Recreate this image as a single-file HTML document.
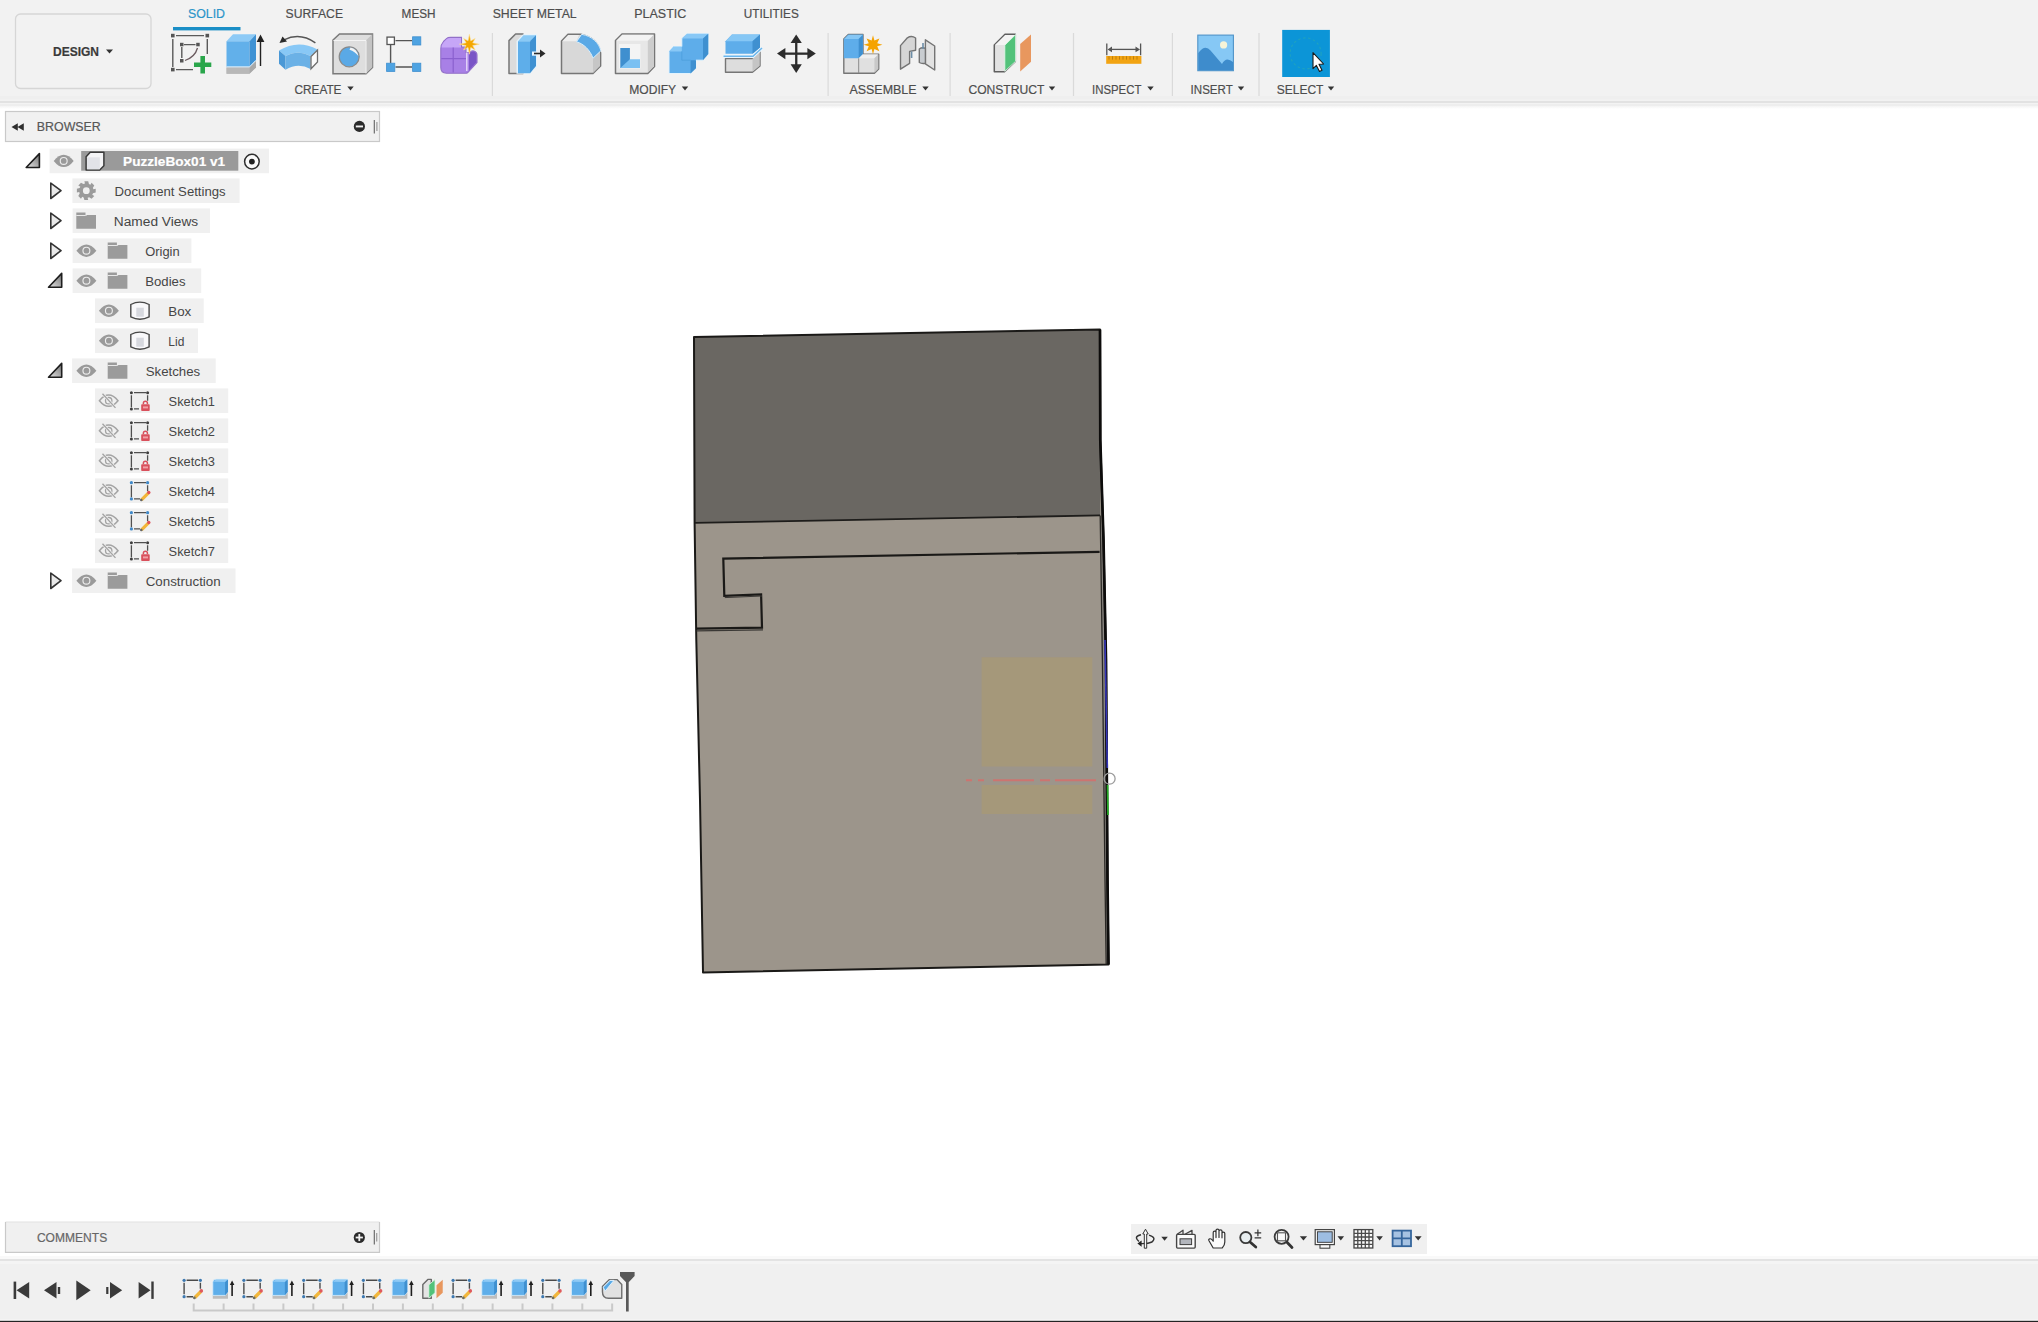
<!DOCTYPE html>
<html><head><meta charset="utf-8">
<style>
html,body{margin:0;padding:0;background:#fff;width:2038px;height:1322px;overflow:hidden}
svg{position:absolute;left:0;top:0;display:block}
text{font-family:"Liberation Sans",sans-serif;stroke-width:0.2px;paint-order:stroke}
</style></head>
<body>
<svg width="2038" height="1322" viewBox="0 0 2038 1322">
<defs>
<linearGradient id="tbshadow" x1="0" y1="0" x2="0" y2="1"><stop offset="0" stop-color="#f4f4f4"/><stop offset="1" stop-color="#ffffff"/></linearGradient>
</defs>
<!-- ============ TOOLBAR ============ -->
<g id="toolbar">
<rect x="0" y="0" width="2038" height="101" fill="#f2f2f2"/>
<rect x="0" y="96" width="2038" height="3.5" fill="#efefef"/>
<rect x="0" y="101" width="2038" height="2" fill="#e2e2e2"/>
<rect x="0" y="103" width="2038" height="1" fill="#f3f3f3"/>
<rect x="0" y="104" width="2038" height="2" fill="#eeeeee"/>
<rect x="0" y="106" width="2038" height="3" fill="url(#tbshadow)"/>
<rect x="15.5" y="14" width="135.5" height="74.5" rx="5" fill="#f2f2f2" stroke="#d6d6d6" stroke-width="1.3"/>
<text x="53" y="56.3" font-size="13.6" font-weight="bold" fill="#3a3a3a" textLength="46" lengthAdjust="spacingAndGlyphs" stroke="#3a3a3a">DESIGN</text>
<path d="M106 49.5 L113 49.5 L109.5 53.5 Z" fill="#333"/>
<!-- tabs -->
<g font-size="13.6" fill="#4d4d4d" stroke="#4d4d4d">
<text x="188" y="17.9" fill="#2b95c9" textLength="37" lengthAdjust="spacingAndGlyphs" stroke="#2b95c9">SOLID</text>
<text x="285.6" y="17.9" textLength="57.4" lengthAdjust="spacingAndGlyphs">SURFACE</text>
<text x="401.6" y="17.9" textLength="34" lengthAdjust="spacingAndGlyphs">MESH</text>
<text x="492.7" y="17.9" textLength="84" lengthAdjust="spacingAndGlyphs">SHEET METAL</text>
<text x="634.3" y="17.9" textLength="52" lengthAdjust="spacingAndGlyphs">PLASTIC</text>
<text x="743.8" y="17.9" textLength="55" lengthAdjust="spacingAndGlyphs">UTILITIES</text>
</g>
<rect x="173" y="27" width="67.5" height="3.4" fill="#1b8ec6"/>
<!-- group labels -->
<g font-size="13.4" fill="#4d4d4d" stroke="#4d4d4d">
<text x="294.5" y="94.4" textLength="47" lengthAdjust="spacingAndGlyphs">CREATE</text>
<text x="629.2" y="94.4" textLength="47" lengthAdjust="spacingAndGlyphs">MODIFY</text>
<text x="849.4" y="94.4" textLength="67.2" lengthAdjust="spacingAndGlyphs">ASSEMBLE</text>
<text x="968.4" y="94.4" textLength="76" lengthAdjust="spacingAndGlyphs">CONSTRUCT</text>
<text x="1092" y="94.4" textLength="49.4" lengthAdjust="spacingAndGlyphs">INSPECT</text>
<text x="1190.6" y="94.4" textLength="42.2" lengthAdjust="spacingAndGlyphs">INSERT</text>
<text x="1276.7" y="94.4" textLength="46.7" lengthAdjust="spacingAndGlyphs">SELECT</text>
</g>
<g fill="#333">
<path d="M347.3 86.6h6.4l-3.2 4z"/>
<path d="M681.8 86.6h6.4l-3.2 4z"/>
<path d="M922.3 86.6h6.4l-3.2 4z"/>
<path d="M1048.8 86.6h6.4l-3.2 4z"/>
<path d="M1147.3 86.6h6.4l-3.2 4z"/>
<path d="M1237.8 86.6h6.4l-3.2 4z"/>
<path d="M1327.8 86.6h6.4l-3.2 4z"/>
</g>
<g fill="#dadada">
<rect x="491.8" y="33" width="1.2" height="63"/>
<rect x="827.5" y="33" width="1.2" height="63"/>
<rect x="949.5" y="33" width="1.2" height="63"/>
<rect x="1072.9" y="33" width="1.2" height="63"/>
<rect x="1171.8" y="33" width="1.2" height="63"/>
<rect x="1258.4" y="33" width="1.2" height="63"/>
</g>
<!-- Create sketch -->
<g>
<g stroke="#5a5a5a" stroke-width="1.4" fill="none">
<path d="M176 35.6H204M172.8 39V67M207.3 39V54M176 69.6H193"/>
<path d="M184 44.6H195.5M181.8 47V58"/>
</g>
<path d="M197.5 48 Q195 57 185 60.5" stroke="#6a5a5e" stroke-width="1.3" fill="none"/>
<g fill="#555">
<rect x="171" y="33.8" width="3.6" height="3.6"/><rect x="205.5" y="33.8" width="3.6" height="3.6"/><rect x="171" y="67.8" width="3.6" height="3.6"/>
<rect x="180" y="42.8" width="3.5" height="3.5"/><rect x="196.2" y="42.8" width="3.5" height="3.5"/><rect x="180" y="59" width="3.5" height="3.5"/>
</g>
<path d="M200.4 56H205V62.5H211.3V67H205V73.5H200.4V67H194V62.5H200.4Z" fill="#2aa64b"/>
</g>
<!-- Extrude -->
<g>
<path d="M226.5 67.5H249.5L256 61V67.5L249.5 73.8H226.5Z" fill="#c2c2c2"/>
<path d="M226.5 67.3H249.5V73.8H226.5Z" fill="#b8b8b8"/>
<path d="M249.5 67.3L256 61V67.5L249.5 73.8Z" fill="#a9a9a9"/>
<path d="M226.5 41.2H249.5V66.8H226.5Z" fill="#62b0ea"/>
<path d="M226.5 41.2L233 34.3H256L249.5 41.2Z" fill="#8dcaf6"/>
<path d="M249.5 41.2L256 34.3V60.2L249.5 66.8Z" fill="#3f92d4"/>
<path d="M226.5 66.8H249.5L256 60.2" stroke="#cfe8fa" stroke-width="1" fill="none"/>
<path d="M260.5 66V40" stroke="#222" stroke-width="1.4"/>
<path d="M256.6 42L260.5 34.5L264.4 42Z" fill="#222"/>
</g>
<!-- Revolve -->
<g>
<path d="M315.4 42.8 Q300 32 284 39.8" stroke="#555" stroke-width="1.5" fill="none"/>
<path d="M279.5 43L282.5 36.6L287 41.6Z" fill="#2a2a2a"/>
<path d="M279 50.5 Q298 39 317.5 49.5 L310.5 56 Q298 49 285.5 56 Z" fill="#88c8f6"/>
<path d="M279 50.5 L285.5 56 L285.5 69.8 L279 63.8 Z" fill="#4a98d6"/>
<path d="M285.5 56 Q298 49 310.5 56 L310.5 69 Q298 62 285.5 69.8 Z" fill="#6bb1e6"/>
<path d="M311 56.5 L317.5 50 L317.5 62 L311 68.8 Z" fill="#fbfbfb" stroke="#6d6d6d" stroke-width="1.3"/>
</g>
<!-- Hole -->
<g>
<path d="M333 40L339.5 33.9H372.5V67.5L366 73.7H333Z" fill="#dedede" stroke="#7a7a7a" stroke-width="1.5"/>
<path d="M365.8 40.6L372.3 34.2V67.3L365.8 73.4Z" fill="#c4c4c4"/>
<path d="M333.5 40.5H366V73.4" stroke="#f4f4f4" stroke-width="1" fill="none"/>
<circle cx="349.2" cy="56.8" r="10" fill="#5aa9e6" stroke="#8a8a8a" stroke-width="1.2"/>
<path d="M350.5 47.6 Q357 49 358.4 56 Q355 51.5 349.5 49.8Z" fill="#f4f4f4"/>
</g>
<!-- Pattern -->
<g>
<path d="M395.5 40.6H412M390.6 45V63M395.5 67H412" stroke="#555" stroke-width="1.4"/>
<rect x="387" y="37.1" width="7.4" height="7.4" fill="#fff" stroke="#555" stroke-width="1.3"/>
<g fill="#4ea3e2" stroke="#3f8fd0" stroke-width="0.8">
<rect x="412.6" y="36.8" width="8.2" height="8.2"/>
<rect x="386.6" y="63.2" width="8.2" height="8.2"/>
<rect x="412.6" y="63.2" width="8.2" height="8.2"/>
</g>
</g>
<!-- Form -->
<g>
<path d="M446.5 73.2Q440.8 73.2 440.8 67.5V48.5Q440.8 44.5 443.5 41.5L446.5 38.6Q447.8 37.4 450.5 37.4H461.5V47H466V52.5H469.5Q471 50.5 474 51Q477 52 477 55V62.5L467.5 72.8Q467 73.2 465.5 73.2Z" fill="#a880e6" stroke="#9270c8" stroke-width="1.1"/>
<path d="M441.6 47.5Q441.6 44.6 443.9 42L446.9 39Q448.1 38.1 450.5 38.1H461V47.5Z" fill="#c6a6f7"/>
<path d="M453.2 47.5V72.6M441.3 58.7H466" stroke="#8a60cf" stroke-width="1.2"/>
<path d="M469 53Q470.5 51.2 473.5 51.5Q476.4 52.3 476.4 55V62.3L469 70.5Z" fill="#7a55c6"/>
<path d="M466.8 52.5V71" stroke="#eadffb" stroke-width="1.3"/>
<path d="M469.40 34.20 L470.78 40.87 L475.20 38.40 L472.73 42.82 L479.40 44.20 L472.73 45.58 L475.20 50.00 L470.78 47.53 L469.40 54.20 L468.02 47.53 L463.60 50.00 L466.07 45.58 L459.40 44.20 L466.07 42.82 L463.60 38.40 L468.02 40.87Z" fill="#f4a700" stroke="#fbe3a0" stroke-width="0.6"/>
</g>
<!-- Press pull -->
<g>
<path d="M509 73.5V40.6L515.6 34H523V73.5Z" fill="#dcdcdc" stroke="#767676" stroke-width="1.5" stroke-linejoin="round"/>
<path d="M516.5 41L523 34.2H537V66.5L530.3 73.8H516.5Z" fill="#e3f3fd"/>
<path d="M518 41.2H530V73.2H518Z" fill="#5eaeea"/>
<path d="M518 41.2L523.5 35.2H536V41.2H530Z" fill="#8acaf6"/>
<path d="M530 41.2L536 35.2V66L530 73.2Z" fill="#3f91d2"/>
<rect x="532" y="51.5" width="4" height="4.2" fill="#e8f6ff"/>
<path d="M534 53.5H541" stroke="#2a2a2a" stroke-width="1.6"/>
<path d="M540 49.4L545.5 53.5L540 57.6Z" fill="#2a2a2a"/>
</g>
<!-- Fillet -->
<g>
<path d="M561.5 73.5V41L568 34.2H581 Q598 38 600.6 53V66L593 73.5Z" fill="#d8d8d8" stroke="#767676" stroke-width="1.5" stroke-linejoin="round"/>
<path d="M562.3 41.3L568.3 35H579L576.5 41.3Z" fill="#eeeeee"/>
<path d="M593 57L600 50.5V66L593 73Z" fill="#c6c6c6"/>
<path d="M581.6 34.3C592 36 599 43 600.9 50.8L593 58.2C590 50 584 44 576.5 41.7Z" fill="#5aa9e6" stroke="#d6edfc" stroke-width="1"/>
</g>
<!-- Shell -->
<g>
<path d="M615.5 73.5V40.5L622 34H654.5V66.5L647.8 73.5Z" fill="#e7e7e7" stroke="#767676" stroke-width="1.5" stroke-linejoin="round"/>
<path d="M647.8 41L654 34.6V66.3L647.8 72.8Z" fill="#cdcdcd"/>
<path d="M616.3 40.8L622.3 34.8H653.5L647.5 40.8Z" fill="#f3f3f3"/>
<rect x="619" y="44" width="21.5" height="24.5" fill="#f4f4f4"/>
<rect x="620.3" y="48" width="9.6" height="20" fill="#3f8fcf"/>
<path d="M620.3 68L629.9 59.3H640V68Z" fill="#7ac0f2"/>
</g>
<!-- Combine -->
<g>
<path d="M669 73.5V51.4L673.4 46.5H681.8V38.6L687 33.7H708.3V54L703 60.2H696V68.2L690.6 73.5Z" fill="#5eadea" stroke="#e3f3fd" stroke-width="1"/>
<path d="M681.8 38.6L687 33.7H708.3L703 38.6Z" fill="#88c8f6"/>
<path d="M703 38.6L708.3 33.7V54L703 60.2Z" fill="#3f90d0"/>
<path d="M669 51.4L673.4 46.5H681.8V51.4Z" fill="#88c8f6"/>
<path d="M690.6 60.2H696V68.2L690.6 73.5Z" fill="#3f90d0"/>
<path d="M681.8 51.4V60.2H690.6" stroke="#4d9edc" stroke-width="0.8" fill="none"/>
</g>
<!-- Split body -->
<g>
<path d="M725.5 72.2V58.6H752.5L760 51.5V66L752.5 72.2Z" fill="#dddddd" stroke="#767676" stroke-width="1.4" stroke-linejoin="round"/>
<path d="M752.5 58.8L759.6 52V65.8L752.5 71.8Z" fill="#c5c5c5"/>
<path d="M723.5 56.3H753L762 48" stroke="#eaf6ff" stroke-width="3.6" fill="none"/>
<path d="M723.5 56.3H753L762 48" stroke="#6bb6ec" stroke-width="1.5" fill="none"/>
<path d="M725.5 41.2L732 34.4H760V47.5L752.5 53.8H725.5Z" fill="#5eadea"/>
<path d="M725.5 41.2L732 34.4H760L752.5 41.2Z" fill="#86c7f5"/>
<path d="M752.5 41.2L760 34.4V47.5L752.5 53.8Z" fill="#3f90d0"/>
</g>
<!-- Move -->
<g fill="#2c2c2c">
<rect x="795.1" y="40" width="2.3" height="27"/>
<rect x="783" y="52.5" width="27" height="2.3"/>
<path d="M796.2 34.6L801.8 43H790.6Z"/>
<path d="M796.2 73L801.8 64.3H790.6Z"/>
<path d="M777 53.6L785.4 48V59.2Z"/>
<path d="M815.8 53.6L807.4 48V59.2Z"/>
</g>
<!-- New component -->
<g>
<path d="M843.8 73.2V39L848.3 34.4H863V54.2H878.7V68.9L874.4 73.2Z" fill="#e0e0e0" stroke="#767676" stroke-width="1.4" stroke-linejoin="round"/>
<path d="M843.8 58.3V39L848.3 34.4H863V54.2L858.7 58.3Z" fill="#5eadea"/>
<path d="M844.3 39L848.5 35H862.5L858.5 39Z" fill="#86c7f5"/>
<path d="M858.7 39L862.8 35V54.2L858.7 58.3Z" fill="#3f90d0"/>
<path d="M858.7 58.3L862.8 54.2H878.3L874.4 58.3Z" fill="#efefef"/>
<path d="M874.4 58.3L878.3 54.4V68.8L874.4 72.8Z" fill="#c8c8c8"/>
<path d="M858.7 58.3V73" stroke="#8a8a8a" stroke-width="1"/>
<path d="M873 35.2L874.4 40.6L879.4 38.4L877.2 43.3L882.4 44.8L877.2 46.3L879.4 51.2L874.4 49L873 54.2L871.6 49L866.6 51.2L868.8 46.3L863.6 44.8L868.8 43.3L866.6 38.4L871.6 40.6Z" fill="#f5a300"/>
</g>
<!-- Joint -->
<g stroke="#747474" stroke-width="1.4" stroke-linejoin="round">
<path d="M900.5 69.2V45.6L907.4 37.8Q911.5 35.2 915.6 38V50.3L909.6 51.4V63.4Z" fill="#d6d6d6"/>
<path d="M925.4 39.8L934.7 46V70L925.4 63.8Z" fill="#e2e2e2"/>
<path d="M919.3 49V62.5Q922 64 925.4 63.2V48.3Q922 47 919.3 49Z" fill="#c8ccd0"/>
</g>
<path d="M911.6 51.5V58M923 43V49" stroke="#6d8ea8" stroke-width="1.6"/>
<!-- Construct plane -->
<g>
<path d="M994.3 71.7V45L1005 34.2H1015.3V61.5L1004.5 71.7Z" fill="#e2e2e2" stroke="#5f5f5f" stroke-width="1.5" stroke-linejoin="round"/>
<path d="M995 45L1005.3 35H1015L1004.5 45Z" fill="#f4f4f4"/>
<path d="M1004.8 45.2L1015.6 34.6V61.3L1004.8 71.3Z" fill="#52c27a" stroke="#dff7e6" stroke-width="0.9"/>
<path d="M1020.2 43.9L1031 34.6V61.7L1020.2 71.5Z" fill="#e8975e"/>
</g>
<!-- Measure -->
<g>
<path d="M1106.8 43.4V55.3M1140.6 43.4V55.3" stroke="#555" stroke-width="1.3"/>
<path d="M1110 49.4H1137.5" stroke="#555" stroke-width="1.3"/>
<path d="M1107.5 49.4L1112 46.6V52.2Z M1140 49.4L1135.5 46.6V52.2Z" fill="#555"/>
<rect x="1106.2" y="56" width="35.2" height="7.8" fill="#f2a413"/>
<path d="M1109 56.2V59.6M1112.5 56.2V59.6M1116 56.2V59.6M1119.5 56.2V59.6M1123 56.2V59.6M1126.5 56.2V59.6M1130 56.2V59.6M1133.5 56.2V59.6M1137 56.2V59.6" stroke="#b87a0a" stroke-width="0.9"/>
</g>
<!-- Insert image -->
<g>
<rect x="1197.8" y="35.1" width="35.6" height="35.6" fill="#86c8f5" stroke="#4f93c8" stroke-width="1.1"/>
<circle cx="1223.6" cy="44.9" r="3.6" fill="#f6f4d8"/>
<path d="M1198.3 70.2V53 Q1205 44 1210.5 50.5 L1222 64 Q1226 56 1233 62V70.2Z" fill="#3e8ccc"/>
</g>
<!-- Select -->
<g>
<rect x="1282.2" y="29.9" width="47.7" height="47.1" fill="#0c95d7"/>
<circle cx="1305.6" cy="53.4" r="15.5" fill="none" stroke="#1fa2c0" stroke-width="1.1" stroke-dasharray="2.5 2.5"/>
<path d="M1313 52.6V68.6L1316.4 65.4L1319.5 71.4L1322 70.2L1319 64.3L1323.6 64Z" fill="#fff" stroke="#1a1a1a" stroke-width="1.1" stroke-linejoin="round"/>
</g>

<!--ICONS_TOOLBAR_END-->
</g>

<!-- ============ BROWSER ============ -->
<g id="browser">
<rect x="5.5" y="111.5" width="374" height="30" fill="#f1f1f1" stroke="#c9c9c9" stroke-width="1.2"/>
<path d="M11.5 127 L17.8 123.2 L17.8 130.8 Z M17.5 127 L23.8 123.2 L23.8 130.8 Z" fill="#2f2f2f"/>
<text x="36.8" y="131" font-size="13" fill="#575757" textLength="64" lengthAdjust="spacingAndGlyphs" stroke="#575757">BROWSER</text>
<circle cx="359.4" cy="126.4" r="5.6" fill="#2b2b2b"/>
<rect x="355.8" y="125.5" width="7.2" height="1.9" fill="#f1f1f1"/>
<rect x="373.7" y="120" width="1.3" height="13.5" fill="#777"/>
<rect x="376.3" y="122" width="1.2" height="9" fill="#999"/>
<!--TREE-->
<defs><linearGradient id="trig" x1="0" y1="1" x2="1" y2="0"><stop offset="0" stop-color="#e8e8e8"/><stop offset="1" stop-color="#707070"/></linearGradient></defs>
<rect x="49.6" y="148.6" width="219.4" height="24.6" fill="#f0f0f0"/>
<path d="M26.2 167.5L39.4 153.6V167.5Z" fill="url(#trig)" stroke="#1e1e1e" stroke-width="1.6" stroke-linejoin="round"/>
<path d="M53.7 160.9 Q63.7 148.5 73.7 160.9 Q63.7 173.3 53.7 160.9Z" fill="#9a9a9a"/>
<circle cx="63.7" cy="160.9" r="4" fill="#ededed"/><circle cx="63.7" cy="160.9" r="2.9" fill="#9a9a9a"/>
<rect x="81.2" y="151" width="157.1" height="19.7" fill="#9a9a9a"/>
<path d="M86.10000000000001 156.8L90.2 152.20000000000002H103.9V165.8L99.7 170.0H86.10000000000001Z" fill="#f4f4f6" stroke="#3a3a3a" stroke-width="1.5" stroke-linejoin="round"/>
<path d="M87.2 157.3H99.8V169.3H87.2Z" fill="#e2e3e8"/>
<text x="123.1" y="166.1" font-size="13.4" font-weight="bold" fill="#ffffff" stroke="#ffffff" textLength="102" lengthAdjust="spacingAndGlyphs">PuzzleBox01 v1</text>
<circle cx="251.9" cy="161.6" r="7.3" fill="#fafafa" stroke="#2e2e2e" stroke-width="1.5"/>
<circle cx="251.9" cy="161.6" r="2.9" fill="#222"/>
<rect x="72.4" y="178.39999999999998" width="167.2" height="24.6" fill="#f0f0f0"/>
<path d="M50.8 183.1L61 190.7L50.8 198.5Z" fill="#e9e9e9" stroke="#333" stroke-width="1.6" stroke-linejoin="round"/>
<path d="M95.71 188.79 L95.71 192.61 L92.99 193.37 L92.24 194.77 L94.30 196.00 L91.60 198.70 L89.14 197.32 L87.63 197.78 L88.21 200.11 L84.39 200.11 L83.63 197.39 L82.23 196.64 L81.00 198.70 L78.30 196.00 L79.68 193.54 L79.22 192.03 L76.89 192.61 L76.89 188.79 L79.61 188.03 L80.36 186.63 L78.30 185.40 L81.00 182.70 L83.46 184.08 L84.97 183.62 L84.39 181.29 L88.21 181.29 L88.97 184.01 L90.37 184.76 L91.60 182.70 L94.30 185.40 L92.92 187.86 L93.38 189.37Z" fill="#9b9b9b"/>
<circle cx="86.3" cy="190.7" r="3.4" fill="#f0f0f0"/>
<text x="114.6" y="195.6" font-size="13.7" fill="#464646" stroke="none" textLength="111" lengthAdjust="spacingAndGlyphs">Document Settings</text>
<rect x="72.6" y="208.39999999999998" width="137.4" height="24.6" fill="#f0f0f0"/>
<path d="M50.8 213.1L61 220.7L50.8 228.5Z" fill="#e9e9e9" stroke="#333" stroke-width="1.6" stroke-linejoin="round"/>
<path d="M76.3 228.8V212.5H85.5V214.9H96.0V228.8Z" fill="#9b9b9b"/>
<path d="M76.3 215.5H85.5L86.89999999999999 214.9" stroke="#f0f0f0" stroke-width="0.9" fill="none"/>
<text x="113.8" y="225.6" font-size="13.7" fill="#464646" stroke="none" textLength="84.4" lengthAdjust="spacingAndGlyphs">Named Views</text>
<rect x="72.6" y="238.39999999999998" width="118.80000000000001" height="24.6" fill="#f0f0f0"/>
<path d="M50.8 243.1L61 250.7L50.8 258.5Z" fill="#e9e9e9" stroke="#333" stroke-width="1.6" stroke-linejoin="round"/>
<path d="M76.4 250.7 Q86.4 238.29999999999998 96.4 250.7 Q86.4 263.09999999999997 76.4 250.7Z" fill="#9a9a9a"/>
<circle cx="86.4" cy="250.7" r="4" fill="#ededed"/><circle cx="86.4" cy="250.7" r="2.9" fill="#9a9a9a"/>
<path d="M107.7 258.8V242.5H116.9V244.9H127.4V258.8Z" fill="#9b9b9b"/>
<path d="M107.7 245.5H116.9L118.3 244.9" stroke="#f0f0f0" stroke-width="0.9" fill="none"/>
<text x="145.2" y="255.6" font-size="13.7" fill="#464646" stroke="none" textLength="34.4" lengthAdjust="spacingAndGlyphs">Origin</text>
<rect x="72.6" y="268.4" width="128.6" height="24.6" fill="#f0f0f0"/>
<path d="M48.5 287.3L61.7 273.4V287.3Z" fill="url(#trig)" stroke="#1e1e1e" stroke-width="1.6" stroke-linejoin="round"/>
<path d="M76.4 280.7 Q86.4 268.3 96.4 280.7 Q86.4 293.09999999999997 76.4 280.7Z" fill="#9a9a9a"/>
<circle cx="86.4" cy="280.7" r="4" fill="#ededed"/><circle cx="86.4" cy="280.7" r="2.9" fill="#9a9a9a"/>
<path d="M107.7 288.8V272.5H116.9V274.9H127.4V288.8Z" fill="#9b9b9b"/>
<path d="M107.7 275.5H116.9L118.3 274.9" stroke="#f0f0f0" stroke-width="0.9" fill="none"/>
<text x="145.2" y="285.59999999999997" font-size="13.7" fill="#464646" stroke="none" textLength="40.3" lengthAdjust="spacingAndGlyphs">Bodies</text>
<rect x="95" y="298.4" width="108.69999999999999" height="24.6" fill="#f0f0f0"/>
<path d="M98.9 310.7 Q108.9 298.3 118.9 310.7 Q108.9 323.09999999999997 98.9 310.7Z" fill="#9a9a9a"/>
<circle cx="108.9" cy="310.7" r="4" fill="#ededed"/><circle cx="108.9" cy="310.7" r="2.9" fill="#9a9a9a"/>
<path d="M130.79999999999998 304.5 Q139.9 299.8 149.1 304.5 V316.9 Q139.9 321.6 130.79999999999998 316.9Z" fill="#f8f8fa" stroke="#474747" stroke-width="1.4"/>
<rect x="136.3" y="307.7" width="7.5" height="9" fill="#d6d8de"/>
<text x="168.3" y="315.59999999999997" font-size="13.7" fill="#464646" stroke="none" textLength="23" lengthAdjust="spacingAndGlyphs">Box</text>
<rect x="95" y="328.4" width="103" height="24.6" fill="#f0f0f0"/>
<path d="M98.9 340.7 Q108.9 328.3 118.9 340.7 Q108.9 353.09999999999997 98.9 340.7Z" fill="#9a9a9a"/>
<circle cx="108.9" cy="340.7" r="4" fill="#ededed"/><circle cx="108.9" cy="340.7" r="2.9" fill="#9a9a9a"/>
<path d="M130.79999999999998 334.5 Q139.9 329.8 149.1 334.5 V346.9 Q139.9 351.6 130.79999999999998 346.9Z" fill="#f8f8fa" stroke="#474747" stroke-width="1.4"/>
<rect x="136.3" y="337.7" width="7.5" height="9" fill="#d6d8de"/>
<text x="168.3" y="345.59999999999997" font-size="13.7" fill="#464646" stroke="none" textLength="16" lengthAdjust="spacingAndGlyphs">Lid</text>
<rect x="72.1" y="358.4" width="143.6" height="24.6" fill="#f0f0f0"/>
<path d="M48.5 377.3L61.7 363.4V377.3Z" fill="url(#trig)" stroke="#1e1e1e" stroke-width="1.6" stroke-linejoin="round"/>
<path d="M76.4 370.7 Q86.4 358.3 96.4 370.7 Q86.4 383.09999999999997 76.4 370.7Z" fill="#9a9a9a"/>
<circle cx="86.4" cy="370.7" r="4" fill="#ededed"/><circle cx="86.4" cy="370.7" r="2.9" fill="#9a9a9a"/>
<path d="M107.7 378.8V362.5H116.9V364.9H127.4V378.8Z" fill="#9b9b9b"/>
<path d="M107.7 365.5H116.9L118.3 364.9" stroke="#f0f0f0" stroke-width="0.9" fill="none"/>
<text x="145.7" y="375.59999999999997" font-size="13.7" fill="#464646" stroke="none" textLength="54.5" lengthAdjust="spacingAndGlyphs">Sketches</text>
<rect x="95" y="388.4" width="133.2" height="24.6" fill="#f0f0f0"/>
<path d="M99.4 400.7 Q108.7 389.5 118.0 400.7 Q108.7 411.9 99.4 400.7Z" fill="none" stroke="#a3a3a3" stroke-width="1.5"/>
<circle cx="108.7" cy="400.7" r="3.2" fill="none" stroke="#a3a3a3" stroke-width="1.3"/>
<path d="M102.5 393.7 L115.5 407.9" stroke="#f0f0f0" stroke-width="2.6"/>
<path d="M102.5 393.7 L115.5 407.9" stroke="#a3a3a3" stroke-width="1.3"/>
<path d="M134 392.7H146M131.4 395.3V407.3M147.6 395.3V400.8M134 408.90000000000003H139" stroke="#505050" stroke-width="1.3"/>
<circle cx="131.4" cy="392.7" r="1.5" fill="#3d3d3d"/>
<circle cx="147.6" cy="392.7" r="1.5" fill="#3d3d3d"/>
<circle cx="131.4" cy="408.90000000000003" r="1.5" fill="#3d3d3d"/>
<path d="M143.39999999999998 404.2V403.0Q143.39999999999998 401.2 145.39999999999998 401.2 Q147.39999999999998 401.2 147.39999999999998 403.0V404.2" stroke="#d8505c" stroke-width="1.5" fill="none"/>
<rect x="141.2" y="404.2" width="8.5" height="6.8" rx="0.8" fill="#d9505c"/>
<rect x="143.0" y="406.4" width="5" height="2" fill="#f0a0a8"/>
<text x="168.6" y="405.59999999999997" font-size="13.7" fill="#464646" stroke="none" textLength="46.4" lengthAdjust="spacingAndGlyphs">Sketch1</text>
<rect x="95" y="418.4" width="133.2" height="24.6" fill="#f0f0f0"/>
<path d="M99.4 430.7 Q108.7 419.5 118.0 430.7 Q108.7 441.9 99.4 430.7Z" fill="none" stroke="#a3a3a3" stroke-width="1.5"/>
<circle cx="108.7" cy="430.7" r="3.2" fill="none" stroke="#a3a3a3" stroke-width="1.3"/>
<path d="M102.5 423.7 L115.5 437.9" stroke="#f0f0f0" stroke-width="2.6"/>
<path d="M102.5 423.7 L115.5 437.9" stroke="#a3a3a3" stroke-width="1.3"/>
<path d="M134 422.7H146M131.4 425.3V437.3M147.6 425.3V430.8M134 438.90000000000003H139" stroke="#505050" stroke-width="1.3"/>
<circle cx="131.4" cy="422.7" r="1.5" fill="#3d3d3d"/>
<circle cx="147.6" cy="422.7" r="1.5" fill="#3d3d3d"/>
<circle cx="131.4" cy="438.90000000000003" r="1.5" fill="#3d3d3d"/>
<path d="M143.39999999999998 434.2V433.0Q143.39999999999998 431.2 145.39999999999998 431.2 Q147.39999999999998 431.2 147.39999999999998 433.0V434.2" stroke="#d8505c" stroke-width="1.5" fill="none"/>
<rect x="141.2" y="434.2" width="8.5" height="6.8" rx="0.8" fill="#d9505c"/>
<rect x="143.0" y="436.4" width="5" height="2" fill="#f0a0a8"/>
<text x="168.6" y="435.59999999999997" font-size="13.7" fill="#464646" stroke="none" textLength="46.4" lengthAdjust="spacingAndGlyphs">Sketch2</text>
<rect x="95" y="448.4" width="133.2" height="24.6" fill="#f0f0f0"/>
<path d="M99.4 460.7 Q108.7 449.5 118.0 460.7 Q108.7 471.9 99.4 460.7Z" fill="none" stroke="#a3a3a3" stroke-width="1.5"/>
<circle cx="108.7" cy="460.7" r="3.2" fill="none" stroke="#a3a3a3" stroke-width="1.3"/>
<path d="M102.5 453.7 L115.5 467.9" stroke="#f0f0f0" stroke-width="2.6"/>
<path d="M102.5 453.7 L115.5 467.9" stroke="#a3a3a3" stroke-width="1.3"/>
<path d="M134 452.7H146M131.4 455.3V467.3M147.6 455.3V460.8M134 468.90000000000003H139" stroke="#505050" stroke-width="1.3"/>
<circle cx="131.4" cy="452.7" r="1.5" fill="#3d3d3d"/>
<circle cx="147.6" cy="452.7" r="1.5" fill="#3d3d3d"/>
<circle cx="131.4" cy="468.90000000000003" r="1.5" fill="#3d3d3d"/>
<path d="M143.39999999999998 464.2V463.0Q143.39999999999998 461.2 145.39999999999998 461.2 Q147.39999999999998 461.2 147.39999999999998 463.0V464.2" stroke="#d8505c" stroke-width="1.5" fill="none"/>
<rect x="141.2" y="464.2" width="8.5" height="6.8" rx="0.8" fill="#d9505c"/>
<rect x="143.0" y="466.4" width="5" height="2" fill="#f0a0a8"/>
<text x="168.6" y="465.59999999999997" font-size="13.7" fill="#464646" stroke="none" textLength="46.4" lengthAdjust="spacingAndGlyphs">Sketch3</text>
<rect x="95" y="478.4" width="133.2" height="24.6" fill="#f0f0f0"/>
<path d="M99.4 490.7 Q108.7 479.5 118.0 490.7 Q108.7 501.9 99.4 490.7Z" fill="none" stroke="#a3a3a3" stroke-width="1.5"/>
<circle cx="108.7" cy="490.7" r="3.2" fill="none" stroke="#a3a3a3" stroke-width="1.3"/>
<path d="M102.5 483.7 L115.5 497.9" stroke="#f0f0f0" stroke-width="2.6"/>
<path d="M102.5 483.7 L115.5 497.9" stroke="#a3a3a3" stroke-width="1.3"/>
<path d="M134 482.7H146M131.4 485.3V497.3M147.6 485.3V491.3M134 498.90000000000003H140" stroke="#505050" stroke-width="1.3"/>
<circle cx="131.4" cy="482.7" r="1.6" fill="#3f88c8"/>
<circle cx="147.6" cy="482.7" r="1.6" fill="#3f88c8"/>
<circle cx="131.4" cy="498.90000000000003" r="1.6" fill="#3f88c8"/>
<path d="M141.5 499.8L148.5 492.8" stroke="#f2b53a" stroke-width="3.2"/>
<circle cx="148.8" cy="492.5" r="1.7" fill="#e0505a"/>
<circle cx="141.3" cy="500.0" r="1.3" fill="#666"/>
<text x="168.6" y="495.59999999999997" font-size="13.7" fill="#464646" stroke="none" textLength="46.4" lengthAdjust="spacingAndGlyphs">Sketch4</text>
<rect x="95" y="508.40000000000003" width="133.2" height="24.6" fill="#f0f0f0"/>
<path d="M99.4 520.7 Q108.7 509.50000000000006 118.0 520.7 Q108.7 531.9000000000001 99.4 520.7Z" fill="none" stroke="#a3a3a3" stroke-width="1.5"/>
<circle cx="108.7" cy="520.7" r="3.2" fill="none" stroke="#a3a3a3" stroke-width="1.3"/>
<path d="M102.5 513.7 L115.5 527.9000000000001" stroke="#f0f0f0" stroke-width="2.6"/>
<path d="M102.5 513.7 L115.5 527.9000000000001" stroke="#a3a3a3" stroke-width="1.3"/>
<path d="M134 512.7H146M131.4 515.3000000000001V527.3000000000001M147.6 515.3000000000001V521.3000000000001M134 528.9000000000001H140" stroke="#505050" stroke-width="1.3"/>
<circle cx="131.4" cy="512.7" r="1.6" fill="#3f88c8"/>
<circle cx="147.6" cy="512.7" r="1.6" fill="#3f88c8"/>
<circle cx="131.4" cy="528.9000000000001" r="1.6" fill="#3f88c8"/>
<path d="M141.5 529.8000000000001L148.5 522.8000000000001" stroke="#f2b53a" stroke-width="3.2"/>
<circle cx="148.8" cy="522.5000000000001" r="1.7" fill="#e0505a"/>
<circle cx="141.3" cy="530.0000000000001" r="1.3" fill="#666"/>
<text x="168.6" y="525.6" font-size="13.7" fill="#464646" stroke="none" textLength="46.4" lengthAdjust="spacingAndGlyphs">Sketch5</text>
<rect x="95" y="538.4000000000001" width="133.2" height="24.6" fill="#f0f0f0"/>
<path d="M99.4 550.7 Q108.7 539.5 118.0 550.7 Q108.7 561.9000000000001 99.4 550.7Z" fill="none" stroke="#a3a3a3" stroke-width="1.5"/>
<circle cx="108.7" cy="550.7" r="3.2" fill="none" stroke="#a3a3a3" stroke-width="1.3"/>
<path d="M102.5 543.7 L115.5 557.9000000000001" stroke="#f0f0f0" stroke-width="2.6"/>
<path d="M102.5 543.7 L115.5 557.9000000000001" stroke="#a3a3a3" stroke-width="1.3"/>
<path d="M134 542.7H146M131.4 545.3000000000001V557.3000000000001M147.6 545.3000000000001V550.8000000000001M134 558.9000000000001H139" stroke="#505050" stroke-width="1.3"/>
<circle cx="131.4" cy="542.7" r="1.5" fill="#3d3d3d"/>
<circle cx="147.6" cy="542.7" r="1.5" fill="#3d3d3d"/>
<circle cx="131.4" cy="558.9000000000001" r="1.5" fill="#3d3d3d"/>
<path d="M143.39999999999998 554.2V553.0Q143.39999999999998 551.2 145.39999999999998 551.2 Q147.39999999999998 551.2 147.39999999999998 553.0V554.2" stroke="#d8505c" stroke-width="1.5" fill="none"/>
<rect x="141.2" y="554.2" width="8.5" height="6.8" rx="0.8" fill="#d9505c"/>
<rect x="143.0" y="556.4000000000001" width="5" height="2" fill="#f0a0a8"/>
<text x="168.6" y="555.6" font-size="13.7" fill="#464646" stroke="none" textLength="46.4" lengthAdjust="spacingAndGlyphs">Sketch7</text>
<rect x="72.1" y="568.4000000000001" width="163.4" height="24.6" fill="#f0f0f0"/>
<path d="M50.8 573.1L61 580.7L50.8 588.5Z" fill="#e9e9e9" stroke="#333" stroke-width="1.6" stroke-linejoin="round"/>
<path d="M76.4 580.7 Q86.4 568.3000000000001 96.4 580.7 Q86.4 593.1 76.4 580.7Z" fill="#9a9a9a"/>
<circle cx="86.4" cy="580.7" r="4" fill="#ededed"/><circle cx="86.4" cy="580.7" r="2.9" fill="#9a9a9a"/>
<path d="M107.7 588.8V572.5H116.9V574.9H127.4V588.8Z" fill="#9b9b9b"/>
<path d="M107.7 575.5H116.9L118.3 574.9" stroke="#f0f0f0" stroke-width="0.9" fill="none"/>
<text x="145.7" y="585.6" font-size="13.7" fill="#464646" stroke="none" textLength="75" lengthAdjust="spacingAndGlyphs">Construction</text>
<!--TREE_END-->
</g>

<!-- ============ MODEL ============ -->
<g id="model">
<!--MODEL-->
<path d="M694 337L1100 329.5L1100.3 440L1103.5 540L1106 660L1107.5 880L1108.5 964.5L703 972.5L700 800L696.3 640L694.6 523Z" fill="#9c958b"/>
<path d="M694 337L1100 329.5L1100.2 515.4L694.7 522.9Z" fill="#6a6762"/>
<path d="M1100.2 515.4L1103.3 535L1106 660L1107.5 880L1108.5 964.5L1106 964L1105 880L1102.4 660Z" fill="#8f8b86"/>
<rect x="981.6" y="657.3" width="110.7" height="109.2" fill="#a5987a"/>
<rect x="981.6" y="785" width="110.7" height="29" fill="#a5987a"/>
<g fill="none" stroke-linejoin="round">
<path d="M1100.2 515.4L1102.4 660L1105 880L1106.2 964" stroke="#2a2825" stroke-width="1.3"/>
<path d="M694 337L1100 329.5L1100.3 440L1103.5 540L1106 660L1107.5 880L1108.5 964.5L703 972.5L700 800L696.3 640L694.6 523Z" stroke="#1a1917" stroke-width="2"/>
<path d="M1100 329.5L1100.3 440L1103.5 540L1106 660L1107.5 880L1108.5 964.5" stroke="#0d0c0b" stroke-width="2.7"/>
<path d="M694.7 522.9L1100 515.4" stroke="#1e1d1b" stroke-width="1.9"/>
<path d="M1099.6 551.8L723.3 558.6L724.3 595.9L761.1 594.4L762 627.6L696.5 628.6" stroke="#1a1917" stroke-width="2.2" stroke-linejoin="miter"/>
<path d="M724.8 597.6L762 596" stroke-width="1" stroke="#3a3835"/>
<path d="M696.5 630.8L763 629.8" stroke-width="1.2" stroke="#3a3835"/>
</g>
<path d="M966 780.3H1098" stroke="#cc7470" stroke-width="1.9" stroke-dasharray="6 6 6 9 41 6 10 5 41"/>
<path d="M1105 640L1107.3 768" stroke="#3434b8" stroke-width="1.6"/>
<path d="M1107.6 785L1108 815" stroke="#26a826" stroke-width="1.8"/>
<circle cx="1109.6" cy="778.7" r="5.5" fill="none" stroke="#9d9d9d" stroke-width="1.3"/>

<!--MODEL_END-->
</g>

<!-- ============ COMMENTS ============ -->
<g id="comments">
<rect x="5.5" y="1222" width="374" height="30.4" fill="#f0f0f0"/>
<path d="M5.5 1222H379.5" stroke="#e2e2e2" stroke-width="1.2"/>
<path d="M5.5 1222V1252.4H379.5V1222" stroke="#c9c9c9" stroke-width="1.2" fill="none"/>
<text x="36.9" y="1241.8" font-size="13" fill="#666" textLength="70.3" lengthAdjust="spacingAndGlyphs" stroke="#666">COMMENTS</text>
<circle cx="359.3" cy="1237.5" r="5.6" fill="#2b2b2b"/>
<rect x="355.7" y="1236.6" width="7.2" height="1.8" fill="#f1f1f1"/>
<rect x="358.4" y="1233.9" width="1.8" height="7.2" fill="#f1f1f1"/>
<rect x="373.7" y="1230" width="1.3" height="14.5" fill="#777"/>
<rect x="376.1" y="1233" width="1.2" height="8.5" fill="#999"/>
</g>

<!-- ============ NAV BAR ============ -->
<g id="navbar">
<rect x="1131" y="1224" width="296" height="30" fill="#f0f0f0"/>
<!--NAV-->
<!-- orbit -->
<g>
<path d="M1139 1241.5 Q1133 1236.5 1141 1234.8" stroke="#333" stroke-width="1.4" fill="none"/>
<path d="M1149 1235.2 Q1157 1237.5 1152 1242 Q1148 1244 1140 1243.6" stroke="#333" stroke-width="1.4" fill="none"/>
<path d="M1137.4 1243.6L1141.6 1240.4V1246.8Z" fill="#222"/>
<path d="M1144.3 1248.2V1234H1142.8L1145.5 1229.2L1148.2 1234H1146.7V1248.2Z" fill="#fafafa" stroke="#333" stroke-width="1" stroke-linejoin="round"/>
<path d="M1161.3 1236.8h6.5l-3.25 3.9z" fill="#333"/>
</g>
<!-- look at -->
<g>
<path d="M1176.8 1234.5L1183 1230.2V1234.5M1184.5 1234.5L1192 1230.4V1234.5" stroke="#444" stroke-width="1.3" fill="none" stroke-linejoin="round"/>
<rect x="1176.6" y="1234.4" width="18.6" height="13.7" rx="1" fill="#fbfbfb" stroke="#444" stroke-width="1.4"/>
<rect x="1180" y="1238.8" width="11.6" height="5.8" fill="#b3b6bd" stroke="#3e3e3e" stroke-width="1"/>
</g>
<!-- pan hand -->
<g>
<path d="M1213.2 1248 L1209 1240.8 Q1208.2 1239.2 1209.6 1238.8 Q1211 1238.5 1212.2 1240 L1213.2 1241.2 V1232.6 Q1213.2 1231.2 1214.6 1231.2 Q1216 1231.2 1216 1232.6 V1237.6 V1230.4 Q1216 1229.2 1217.5 1229.2 Q1219 1229.2 1219 1230.4 V1237.4 V1231 Q1219 1229.8 1220.5 1229.8 Q1222 1229.8 1222 1231 V1237.8 V1233.4 Q1222 1232.2 1223.4 1232.2 Q1224.8 1232.2 1224.8 1233.4 V1242 Q1224.8 1245.5 1222.2 1248Z" fill="#fbfbfb" stroke="#333" stroke-width="1.2" stroke-linejoin="round"/>
</g>
<!-- zoom -->
<g>
<circle cx="1245.8" cy="1237.6" r="5.6" fill="#e8eef0" stroke="#3a3a3a" stroke-width="1.8"/>
<path d="M1250 1242 L1255.8 1247" stroke="#333" stroke-width="2.8" stroke-linecap="round"/>
<path d="M1257.9 1229.4V1236.2M1254.6 1232.8H1261.2M1254.6 1237.8H1261.2" stroke="#333" stroke-width="1.2"/>
</g>
<!-- zoom window -->
<g>
<circle cx="1281.6" cy="1236.8" r="7" fill="#f4f4f4" stroke="#3a3a3a" stroke-width="1.8"/>
<rect x="1277.5" y="1232.8" width="8" height="8" fill="#fafafa" stroke="#555" stroke-width="1.1"/>
<path d="M1287 1242.3 L1292 1247.4" stroke="#333" stroke-width="2.8" stroke-linecap="round"/>
<path d="M1299.8 1236.3h7.3l-3.65 4.3z" fill="#333"/>
</g>
<!-- display -->
<g>
<rect x="1320" y="1244.2" width="9.8" height="4" fill="#fafafa" stroke="#444" stroke-width="1.1"/>
<rect x="1315.2" y="1229.6" width="19.2" height="15" fill="#fafafa" stroke="#444" stroke-width="1.2"/>
<rect x="1317.4" y="1231.8" width="14.8" height="10.5" fill="#9dbde2" stroke="#333" stroke-width="0.9"/>
<path d="M1337.5 1236.3h6.6l-3.3 4.3z" fill="#333"/>
</g>
<!-- grid -->
<g>
<rect x="1354" y="1229.6" width="18.8" height="18.4" fill="#fafafa" stroke="#444" stroke-width="1.3"/>
<path d="M1357.8 1229.6V1248M1361.5 1229.6V1248M1365.3 1229.6V1248M1369 1229.6V1248M1354 1233.3H1372.8M1354 1237H1372.8M1354 1240.6H1372.8M1354 1244.3H1372.8" stroke="#4a4a4a" stroke-width="1.3"/>
<path d="M1376.3 1236.3h6.6l-3.3 4.3z" fill="#333"/>
</g>
<!-- viewports -->
<g>
<rect x="1392.6" y="1230.6" width="18.4" height="15.6" fill="#a6c2e2" stroke="#35659c" stroke-width="1.8"/>
<path d="M1401.8 1230.4V1246.2M1392.4 1238.4H1411" stroke="#35659c" stroke-width="1.8"/>
<path d="M1414.8 1236.3h6.8l-3.4 4.3z" fill="#333"/>
</g>

<!--NAV_END-->
</g>

<!-- ============ TIMELINE ============ -->
<g id="timeline">
<rect x="0" y="1256" width="2038" height="3" fill="#f9f9f9"/>
<rect x="0" y="1259" width="2038" height="2" fill="#e3e3e3"/>
<rect x="0" y="1261" width="2038" height="2.5" fill="#f4f4f4"/>
<rect x="0" y="1263.5" width="2038" height="56.3" fill="#f0f0f0"/>
<rect x="0" y="1319.8" width="2038" height="1" fill="#f8f8f8"/>
<rect x="0" y="1320.8" width="2038" height="1.2" fill="#242424"/>
<g fill="#3a3a3a">
<rect x="13.6" y="1281.6" width="2.6" height="17.4"/>
<path d="M16.5 1290.3 L29.2 1282 L29.2 1298.6 Z"/>
<path d="M44 1290.3 L56.5 1282 L56.5 1298.6 Z"/>
<rect x="57.8" y="1287" width="2.4" height="7"/>
<path d="M76.3 1280.4 L90.7 1290.3 L76.3 1300.2 Z"/>
<rect x="106.2" y="1287" width="2.2" height="7"/>
<path d="M110 1282 L122.2 1290.3 L110 1298.6 Z"/>
<path d="M138.6 1282 L150.5 1290.3 L138.6 1298.6 Z"/>
<rect x="151.3" y="1281.5" width="2.4" height="17.4"/>
</g>
<!--TL-->
<path d="M193.7 1303.5V1310.4H612.1600000000001V1303.5" stroke="#c9c9c9" stroke-width="2" fill="none"/>
<path d="M223.6 1303.5V1310" stroke="#c9c9c9" stroke-width="2"/>
<path d="M253.5 1303.5V1310" stroke="#c9c9c9" stroke-width="2"/>
<path d="M283.4 1303.5V1310" stroke="#c9c9c9" stroke-width="2"/>
<path d="M313.3 1303.5V1310" stroke="#c9c9c9" stroke-width="2"/>
<path d="M343.1 1303.5V1310" stroke="#c9c9c9" stroke-width="2"/>
<path d="M373.0 1303.5V1310" stroke="#c9c9c9" stroke-width="2"/>
<path d="M402.9 1303.5V1310" stroke="#c9c9c9" stroke-width="2"/>
<path d="M432.8 1303.5V1310" stroke="#c9c9c9" stroke-width="2"/>
<path d="M462.7 1303.5V1310" stroke="#c9c9c9" stroke-width="2"/>
<path d="M492.6 1303.5V1310" stroke="#c9c9c9" stroke-width="2"/>
<path d="M522.5 1303.5V1310" stroke="#c9c9c9" stroke-width="2"/>
<path d="M552.4 1303.5V1310" stroke="#c9c9c9" stroke-width="2"/>
<path d="M582.3 1303.5V1310" stroke="#c9c9c9" stroke-width="2"/>
<path d="M186.6 1280.3H198.1M184.1 1282.8V1294.3M200.4 1282.8V1288.8M186.6 1296.7H193.1" stroke="#4a4a4a" stroke-width="1.4"/>
<circle cx="184.1" cy="1280.3" r="1.6" fill="#3c78b0"/>
<circle cx="200.4" cy="1280.3" r="1.6" fill="#3c78b0"/>
<circle cx="184.1" cy="1296.7" r="1.6" fill="#3c78b0"/>
<path d="M194.9 1297.5L200.9 1291.5" stroke="#f2b73c" stroke-width="3.3"/>
<circle cx="201.3" cy="1290.8999999999999" r="1.8" fill="#df5a5e"/>
<circle cx="194.4" cy="1297.8999999999999" r="1.4" fill="#707060"/>
<path d="M212.78999999999996 1295.2H225.28999999999996L227.98999999999995 1292.5V1298.7L225.28999999999996 1298.8H212.78999999999996Z" fill="#bdbdbd"/>
<path d="M212.78999999999996 1282.4Q212.78999999999996 1279.2 215.98999999999995 1279.2H227.98999999999995V1291.8L225.28999999999996 1295.4H212.78999999999996Z" fill="#5eaeea" stroke="#d8eefc" stroke-width="0.8"/>
<path d="M225.08999999999997 1281.8L227.98999999999995 1279.6000000000001V1292.0L225.08999999999997 1295.2Z" fill="#3f90d0"/>
<path d="M213.78999999999996 1281.8Q214.78999999999996 1279.8 216.78999999999996 1279.8H227.28999999999996L225.08999999999997 1282.0Z" fill="#8fcaf5"/>
<path d="M232.1 1296V1283" stroke="#1e1e1e" stroke-width="1.6"/>
<path d="M229.8 1285L232.1 1280.5L234.4 1285Z" fill="#1e1e1e"/>
<path d="M246.38 1280.3H257.88M243.88 1282.8V1294.3M260.18 1282.8V1288.8M246.38 1296.7H252.88" stroke="#4a4a4a" stroke-width="1.4"/>
<circle cx="243.9" cy="1280.3" r="1.6" fill="#3c78b0"/>
<circle cx="260.2" cy="1280.3" r="1.6" fill="#3c78b0"/>
<circle cx="243.9" cy="1296.7" r="1.6" fill="#3c78b0"/>
<path d="M254.68 1297.5L260.68 1291.5" stroke="#f2b73c" stroke-width="3.3"/>
<circle cx="261.1" cy="1290.8999999999999" r="1.8" fill="#df5a5e"/>
<circle cx="254.2" cy="1297.8999999999999" r="1.4" fill="#707060"/>
<path d="M272.57 1295.2H285.07L287.77 1292.5V1298.7L285.07 1298.8H272.57Z" fill="#bdbdbd"/>
<path d="M272.57 1282.4Q272.57 1279.2 275.77 1279.2H287.77V1291.8L285.07 1295.4H272.57Z" fill="#5eaeea" stroke="#d8eefc" stroke-width="0.8"/>
<path d="M284.87 1281.8L287.77 1279.6000000000001V1292.0L284.87 1295.2Z" fill="#3f90d0"/>
<path d="M273.57 1281.8Q274.57 1279.8 276.57 1279.8H287.07L284.87 1282.0Z" fill="#8fcaf5"/>
<path d="M291.9 1296V1283" stroke="#1e1e1e" stroke-width="1.6"/>
<path d="M289.6 1285L291.9 1280.5L294.2 1285Z" fill="#1e1e1e"/>
<path d="M306.15999999999997 1280.3H317.65999999999997M303.65999999999997 1282.8V1294.3M319.96 1282.8V1288.8M306.15999999999997 1296.7H312.65999999999997" stroke="#4a4a4a" stroke-width="1.4"/>
<circle cx="303.7" cy="1280.3" r="1.6" fill="#3c78b0"/>
<circle cx="320.0" cy="1280.3" r="1.6" fill="#3c78b0"/>
<circle cx="303.7" cy="1296.7" r="1.6" fill="#3c78b0"/>
<path d="M314.46 1297.5L320.46 1291.5" stroke="#f2b73c" stroke-width="3.3"/>
<circle cx="320.9" cy="1290.8999999999999" r="1.8" fill="#df5a5e"/>
<circle cx="314.0" cy="1297.8999999999999" r="1.4" fill="#707060"/>
<path d="M332.34999999999997 1295.2H344.84999999999997L347.54999999999995 1292.5V1298.7L344.84999999999997 1298.8H332.34999999999997Z" fill="#bdbdbd"/>
<path d="M332.34999999999997 1282.4Q332.34999999999997 1279.2 335.54999999999995 1279.2H347.54999999999995V1291.8L344.84999999999997 1295.4H332.34999999999997Z" fill="#5eaeea" stroke="#d8eefc" stroke-width="0.8"/>
<path d="M344.65 1281.8L347.54999999999995 1279.6000000000001V1292.0L344.65 1295.2Z" fill="#3f90d0"/>
<path d="M333.34999999999997 1281.8Q334.34999999999997 1279.8 336.34999999999997 1279.8H346.84999999999997L344.65 1282.0Z" fill="#8fcaf5"/>
<path d="M351.6 1296V1283" stroke="#1e1e1e" stroke-width="1.6"/>
<path d="M349.3 1285L351.6 1280.5L353.9 1285Z" fill="#1e1e1e"/>
<path d="M365.93999999999994 1280.3H377.43999999999994M363.43999999999994 1282.8V1294.3M379.73999999999995 1282.8V1288.8M365.93999999999994 1296.7H372.43999999999994" stroke="#4a4a4a" stroke-width="1.4"/>
<circle cx="363.4" cy="1280.3" r="1.6" fill="#3c78b0"/>
<circle cx="379.7" cy="1280.3" r="1.6" fill="#3c78b0"/>
<circle cx="363.4" cy="1296.7" r="1.6" fill="#3c78b0"/>
<path d="M374.23999999999995 1297.5L380.23999999999995 1291.5" stroke="#f2b73c" stroke-width="3.3"/>
<circle cx="380.6" cy="1290.8999999999999" r="1.8" fill="#df5a5e"/>
<circle cx="373.7" cy="1297.8999999999999" r="1.4" fill="#707060"/>
<path d="M392.13 1295.2H404.63L407.33 1292.5V1298.7L404.63 1298.8H392.13Z" fill="#bdbdbd"/>
<path d="M392.13 1282.4Q392.13 1279.2 395.33 1279.2H407.33V1291.8L404.63 1295.4H392.13Z" fill="#5eaeea" stroke="#d8eefc" stroke-width="0.8"/>
<path d="M404.43 1281.8L407.33 1279.6000000000001V1292.0L404.43 1295.2Z" fill="#3f90d0"/>
<path d="M393.13 1281.8Q394.13 1279.8 396.13 1279.8H406.63L404.43 1282.0Z" fill="#8fcaf5"/>
<path d="M411.4 1296V1283" stroke="#1e1e1e" stroke-width="1.6"/>
<path d="M409.1 1285L411.4 1280.5L413.7 1285Z" fill="#1e1e1e"/>
<path d="M422.82 1298.3V1284.5L427.82 1279.4H431.32V1298.3Z" fill="#e4e4e4" stroke="#6a6a6a" stroke-width="1.4" stroke-linejoin="round"/>
<path d="M428.82 1284.8L435.02 1279.6V1292.8L428.82 1298.2Z" fill="#52c27a" stroke="#e0f6e6" stroke-width="0.8"/>
<path d="M436.52 1285.2L442.71999999999997 1279.8V1292.8L436.52 1298.2Z" fill="#e8975e"/>
<path d="M455.60999999999996 1280.3H467.10999999999996M453.10999999999996 1282.8V1294.3M469.40999999999997 1282.8V1288.8M455.60999999999996 1296.7H462.10999999999996" stroke="#4a4a4a" stroke-width="1.4"/>
<circle cx="453.1" cy="1280.3" r="1.6" fill="#3c78b0"/>
<circle cx="469.4" cy="1280.3" r="1.6" fill="#3c78b0"/>
<circle cx="453.1" cy="1296.7" r="1.6" fill="#3c78b0"/>
<path d="M463.90999999999997 1297.5L469.90999999999997 1291.5" stroke="#f2b73c" stroke-width="3.3"/>
<circle cx="470.3" cy="1290.8999999999999" r="1.8" fill="#df5a5e"/>
<circle cx="463.4" cy="1297.8999999999999" r="1.4" fill="#707060"/>
<path d="M481.79999999999995 1295.2H494.29999999999995L496.99999999999994 1292.5V1298.7L494.29999999999995 1298.8H481.79999999999995Z" fill="#bdbdbd"/>
<path d="M481.79999999999995 1282.4Q481.79999999999995 1279.2 484.99999999999994 1279.2H496.99999999999994V1291.8L494.29999999999995 1295.4H481.79999999999995Z" fill="#5eaeea" stroke="#d8eefc" stroke-width="0.8"/>
<path d="M494.09999999999997 1281.8L496.99999999999994 1279.6000000000001V1292.0L494.09999999999997 1295.2Z" fill="#3f90d0"/>
<path d="M482.79999999999995 1281.8Q483.79999999999995 1279.8 485.79999999999995 1279.8H496.29999999999995L494.09999999999997 1282.0Z" fill="#8fcaf5"/>
<path d="M501.1 1296V1283" stroke="#1e1e1e" stroke-width="1.6"/>
<path d="M498.8 1285L501.1 1280.5L503.4 1285Z" fill="#1e1e1e"/>
<path d="M511.69 1295.2H524.19L526.89 1292.5V1298.7L524.19 1298.8H511.69Z" fill="#bdbdbd"/>
<path d="M511.69 1282.4Q511.69 1279.2 514.89 1279.2H526.89V1291.8L524.19 1295.4H511.69Z" fill="#5eaeea" stroke="#d8eefc" stroke-width="0.8"/>
<path d="M523.99 1281.8L526.89 1279.6000000000001V1292.0L523.99 1295.2Z" fill="#3f90d0"/>
<path d="M512.69 1281.8Q513.69 1279.8 515.69 1279.8H526.19L523.99 1282.0Z" fill="#8fcaf5"/>
<path d="M531.0 1296V1283" stroke="#1e1e1e" stroke-width="1.6"/>
<path d="M528.7 1285L531.0 1280.5L533.3 1285Z" fill="#1e1e1e"/>
<path d="M545.28 1280.3H556.78M542.78 1282.8V1294.3M559.0799999999999 1282.8V1288.8M545.28 1296.7H551.78" stroke="#4a4a4a" stroke-width="1.4"/>
<circle cx="542.8" cy="1280.3" r="1.6" fill="#3c78b0"/>
<circle cx="559.1" cy="1280.3" r="1.6" fill="#3c78b0"/>
<circle cx="542.8" cy="1296.7" r="1.6" fill="#3c78b0"/>
<path d="M553.5799999999999 1297.5L559.5799999999999 1291.5" stroke="#f2b73c" stroke-width="3.3"/>
<circle cx="560.0" cy="1290.8999999999999" r="1.8" fill="#df5a5e"/>
<circle cx="553.1" cy="1297.8999999999999" r="1.4" fill="#707060"/>
<path d="M571.47 1295.2H583.97L586.6700000000001 1292.5V1298.7L583.97 1298.8H571.47Z" fill="#bdbdbd"/>
<path d="M571.47 1282.4Q571.47 1279.2 574.6700000000001 1279.2H586.6700000000001V1291.8L583.97 1295.4H571.47Z" fill="#5eaeea" stroke="#d8eefc" stroke-width="0.8"/>
<path d="M583.77 1281.8L586.6700000000001 1279.6000000000001V1292.0L583.77 1295.2Z" fill="#3f90d0"/>
<path d="M572.47 1281.8Q573.47 1279.8 575.47 1279.8H585.97L583.77 1282.0Z" fill="#8fcaf5"/>
<path d="M590.8 1296V1283" stroke="#1e1e1e" stroke-width="1.6"/>
<path d="M588.5 1285L590.8 1280.5L593.1 1285Z" fill="#1e1e1e"/>
<path d="M609.46 1279.6000000000001H616.96L621.76 1284.6000000000001V1298.2H608.46Q602.46 1298.2 602.46 1291.7V1286.6000000000001Z" fill="#e1e1e1" stroke="#6e6e6e" stroke-width="1.4" stroke-linejoin="round"/>
<path d="M603.26 1287.2L609.96 1280.4H613.96L605.0600000000001 1291.2Z" fill="#5aaae6" stroke="#dff1fd" stroke-width="1"/>
<path d="M620 1272H634.6V1276L628.7 1282.2V1311.5H626V1282.2L620 1276Z" fill="#595959"/>
<!--TL_END-->
</g>
</svg>
</body></html>
